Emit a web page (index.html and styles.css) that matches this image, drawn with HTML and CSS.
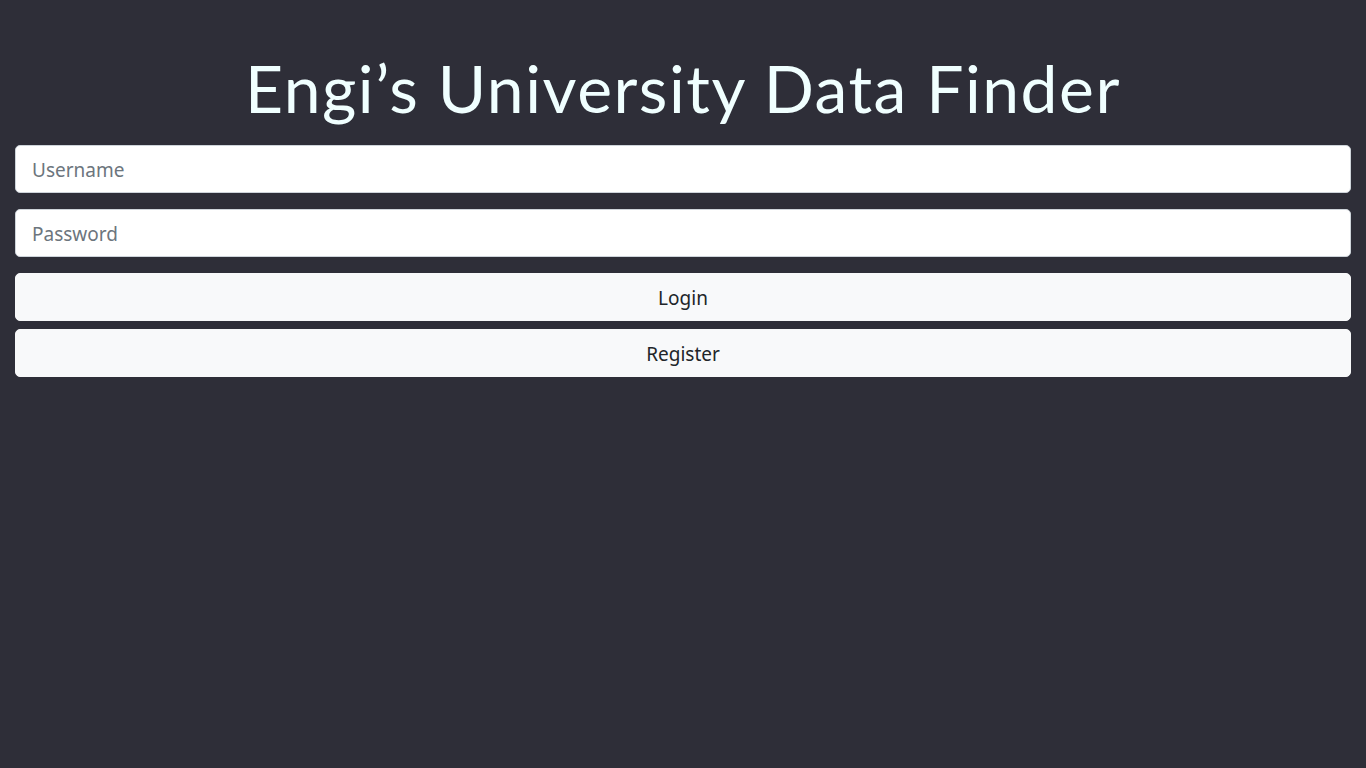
FILE: index.html
```html
<!DOCTYPE html>
<html lang="en">
<head>
    <meta charset="UTF-8">
    <title>Engi's University Data Finder</title>
    <link rel="stylesheet" href="styles.css">
</head>
<body>
    <div class="container">
        <h1 class="title">Engi’s University Data Finder</h1>

        <form class="login-form" onsubmit="return false">
            <input type="text" class="field" placeholder="Username">
            <input type="password" class="field" placeholder="Password">
            <div class="actions">
                <button type="submit" class="btn">Login</button>
                <button type="button" class="btn">Register</button>
            </div>
        </form>
    </div>
</body>
</html>
```

FILE: styles.css
```css
body {
    margin: 0;
    background-color: #2e2e38;
    color: #212529;
    font-family: "Noto Sans", "DejaVu Sans", sans-serif;
}

.container {
    padding: 0 15px;
}

.title {
    margin: 48px 0 18px;
    text-align: center;
    color: #f0ffff;
    font-family: Lato, sans-serif;
    font-weight: 400;
    font-size: 66px;
    letter-spacing: 1.5px;
    line-height: 1.2;
}

.login-form {
    display: flex;
    flex-direction: column;
    gap: 16px;
}

.field {
    box-sizing: border-box;
    width: 100%;
    height: 48px;
    padding: 9px 16px 7px;
    font-family: inherit;
    font-size: 19px;
    color: #495057;
    background-color: #fff;
    border: 1px solid #ced4da;
    border-radius: 5px;
}

.field::placeholder {
    color: #6c757d;
}

.actions {
    display: flex;
    flex-direction: column;
    gap: 8px;
}

.btn {
    height: 48px;
    padding-top: 2px;
    font-family: inherit;
    font-size: 19px;
    color: #212529;
    background-color: #f8f9fa;
    border: 1px solid #f8f9fa;
    border-radius: 5px;
    cursor: pointer;
}
```
